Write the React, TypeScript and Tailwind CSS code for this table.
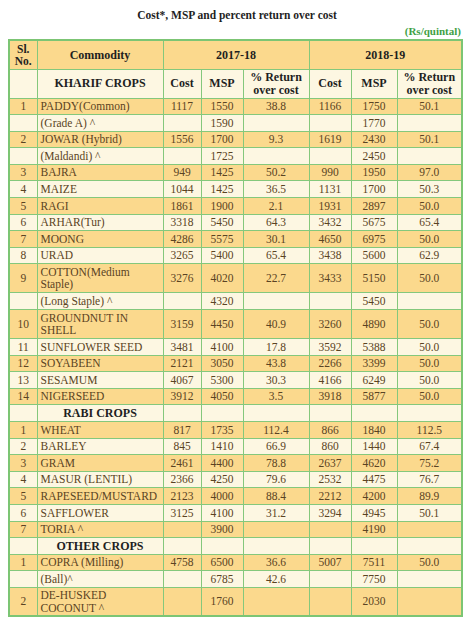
type Row = {
  sl?: string;
  name: string;
  name2?: string;
  c1?: string;
  m1?: string;
  r1?: string;
  c2?: string;
  m2?: string;
  r2?: string;
  section?: boolean;
};

const rows: Row[] = [
  { sl: "1", name: "PADDY(Common)", c1: "1117", m1: "1550", r1: "38.8", c2: "1166", m2: "1750", r2: "50.1" },
  { name: "(Grade A) ^", m1: "1590", m2: "1770" },
  { sl: "2", name: "JOWAR (Hybrid)", c1: "1556", m1: "1700", r1: "9.3", c2: "1619", m2: "2430", r2: "50.1" },
  { name: "(Maldandi) ^", m1: "1725", m2: "2450" },
  { sl: "3", name: "BAJRA", c1: "949", m1: "1425", r1: "50.2", c2: "990", m2: "1950", r2: "97.0" },
  { sl: "4", name: "MAIZE", c1: "1044", m1: "1425", r1: "36.5", c2: "1131", m2: "1700", r2: "50.3" },
  { sl: "5", name: "RAGI", c1: "1861", m1: "1900", r1: "2.1", c2: "1931", m2: "2897", r2: "50.0" },
  { sl: "6", name: "ARHAR(Tur)", c1: "3318", m1: "5450", r1: "64.3", c2: "3432", m2: "5675", r2: "65.4" },
  { sl: "7", name: "MOONG", c1: "4286", m1: "5575", r1: "30.1", c2: "4650", m2: "6975", r2: "50.0" },
  { sl: "8", name: "URAD", c1: "3265", m1: "5400", r1: "65.4", c2: "3438", m2: "5600", r2: "62.9" },
  { sl: "9", name: "COTTON(Medium", name2: "Staple)", c1: "3276", m1: "4020", r1: "22.7", c2: "3433", m2: "5150", r2: "50.0" },
  { name: "(Long Staple) ^", m1: "4320", m2: "5450" },
  { sl: "10", name: "GROUNDNUT IN", name2: "SHELL", c1: "3159", m1: "4450", r1: "40.9", c2: "3260", m2: "4890", r2: "50.0" },
  { sl: "11", name: "SUNFLOWER SEED", c1: "3481", m1: "4100", r1: "17.8", c2: "3592", m2: "5388", r2: "50.0" },
  { sl: "12", name: "SOYABEEN", c1: "2121", m1: "3050", r1: "43.8", c2: "2266", m2: "3399", r2: "50.0" },
  { sl: "13", name: "SESAMUM", c1: "4067", m1: "5300", r1: "30.3", c2: "4166", m2: "6249", r2: "50.0" },
  { sl: "14", name: "NIGERSEED", c1: "3912", m1: "4050", r1: "3.5", c2: "3918", m2: "5877", r2: "50.0" },
  { name: "RABI CROPS", section: true },
  { sl: "1", name: "WHEAT", c1: "817", m1: "1735", r1: "112.4", c2: "866", m2: "1840", r2: "112.5" },
  { sl: "2", name: "BARLEY", c1: "845", m1: "1410", r1: "66.9", c2: "860", m2: "1440", r2: "67.4" },
  { sl: "3", name: "GRAM", c1: "2461", m1: "4400", r1: "78.8", c2: "2637", m2: "4620", r2: "75.2" },
  { sl: "4", name: "MASUR (LENTIL)", c1: "2366", m1: "4250", r1: "79.6", c2: "2532", m2: "4475", r2: "76.7" },
  { sl: "5", name: "RAPESEED/MUSTARD", c1: "2123", m1: "4000", r1: "88.4", c2: "2212", m2: "4200", r2: "89.9" },
  { sl: "6", name: "SAFFLOWER", c1: "3125", m1: "4100", r1: "31.2", c2: "3294", m2: "4945", r2: "50.1" },
  { sl: "7", name: "TORIA ^", m1: "3900", m2: "4190" },
  { name: "OTHER CROPS", section: true },
  { sl: "1", name: "COPRA (Milling)", c1: "4758", m1: "6500", r1: "36.6", c2: "5007", m2: "7511", r2: "50.0" },
  { name: "(Ball)^", m1: "6785", r1: "42.6", m2: "7750" },
  { sl: "2", name: "DE-HUSKED", name2: "COCONUT ^", m1: "1760", m2: "2030" },
];

const cell = "border-[1.5px] border-[#84c87c] p-0";

export default function App() {
  return (
    <div className="w-[474px] h-[629px] bg-white font-['Liberation_Serif',serif] text-[#5a4323]">
      <div className="pt-[8px] h-[24px] text-center text-[11.5px] leading-[14px] font-bold text-[#1f1f1f]">
        Cost*, MSP and percent return over cost
      </div>
      <div className="h-[15px] pr-[13px] text-right text-[11px] leading-[14px] font-bold text-[#3f9f45]">
        (Rs/quintal)
      </div>
      <table className="ml-[8px] w-[453px] table-fixed border-collapse border-2 border-[#7cc574] text-[11.5px] leading-[12.5px]">
        <colgroup>
          <col className="w-[28px]" />
          <col className="w-[126px]" />
          <col className="w-[38px]" />
          <col className="w-[42px]" />
          <col className="w-[66px]" />
          <col className="w-[42px]" />
          <col className="w-[46px]" />
          <col className="w-[65px]" />
        </colgroup>
        <thead className="font-bold text-[#1f1f1f]">
          <tr className="h-[29px] bg-[#fbd98d]">
            <th className={`${cell} text-[11.5px] leading-[12px]`}>
              Sl.
              <br />
              No.
            </th>
            <th className={`${cell} text-[12px]`}>Commodity</th>
            <th colSpan={3} className={`${cell} text-[12px]`}>2017-18</th>
            <th colSpan={3} className={`${cell} text-[12px]`}>2018-19</th>
          </tr>
          <tr className="h-[29px] bg-[#fdf7e2]">
            <th className={cell}></th>
            <th className={`${cell} text-[12px]`}>KHARIF CROPS</th>
            <th className={`${cell} text-[12px]`}>Cost</th>
            <th className={`${cell} text-[12px]`}>MSP</th>
            <th className={`${cell} text-[12px] leading-[12.5px]`}>
              % Return
              <br />
              over cost
            </th>
            <th className={`${cell} text-[12px]`}>Cost</th>
            <th className={`${cell} text-[12px]`}>MSP</th>
            <th className={`${cell} text-[12px] leading-[12.5px]`}>
              % Return
              <br />
              over cost
            </th>
          </tr>
        </thead>
        <tbody>
          {rows.map((r, i) => (
            <tr
              key={i}
              className={`${r.name2 ? "h-[29px]" : "h-[16.6px]"} ${i % 2 === 0 ? "bg-[#fbd98d]" : "bg-[#fdf7e2]"}`}
            >
              <td className={`${cell} text-center`}>{r.sl}</td>
              {r.section ? (
                <td className={`${cell} text-center text-[12px] font-bold text-[#1f1f1f]`}>{r.name}</td>
              ) : (
                <td className={`${cell} pl-[3px] pr-[1px] text-left whitespace-nowrap overflow-hidden`}>
                  {r.name}
                  {r.name2 && (
                    <>
                      <br />
                      {r.name2}
                    </>
                  )}
                </td>
              )}
              <td className={`${cell} text-center`}>{r.c1}</td>
              <td className={`${cell} text-center`}>{r.m1}</td>
              <td className={`${cell} text-center`}>{r.r1}</td>
              <td className={`${cell} text-center`}>{r.c2}</td>
              <td className={`${cell} text-center`}>{r.m2}</td>
              <td className={`${cell} text-center`}>{r.r2}</td>
            </tr>
          ))}
        </tbody>
      </table>
    </div>
  );
}
